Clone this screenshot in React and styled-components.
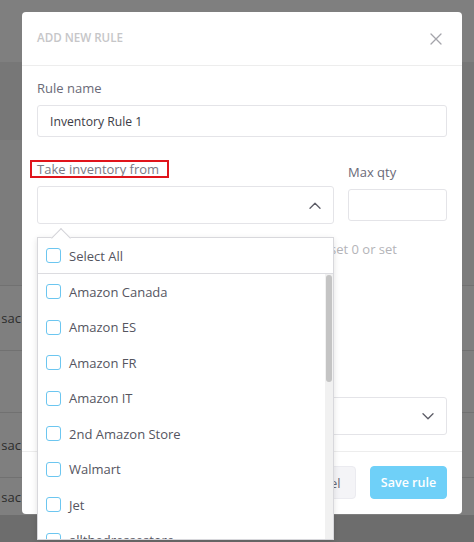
import React from 'react';
import styled, { createGlobalStyle } from 'styled-components';

const Global = createGlobalStyle`
  html, body { margin: 0; padding: 0; }
  body { font-family: 'Open Sans', 'Noto Sans', sans-serif; background: #808080; }
  * { box-sizing: border-box; }
`;

const Screen = styled.div`
  position: relative;
  width: 474px;
  height: 542px;
  overflow: hidden;
  background: #fff;
`;

/* ---------- page behind the overlay ---------- */
const Page = styled.div`
  display: flex;
  flex-direction: column;
  height: 100%;
`;
const PageBand = styled.div`
  height: ${p => p.$h}px;
  flex: none;
  background: ${p => p.$bg};
`;
const PageRow = styled.div`
  height: ${p => p.$h}px;
  flex: none;
  display: flex;
  align-items: center;
  border-top: 1px solid #e2e2e2;
  background: #fff;
`;
const RowCell = styled.div`
  width: 21px;
  display: flex;
  justify-content: flex-end;
  overflow: hidden;
  white-space: nowrap;
  font-size: 13px;
  color: #5a5a5a;
`;
const PageFoot = styled.div`
  flex: 1;
  background: #dadada;
`;

const Overlay = styled.div`
  position: absolute;
  inset: 0;
  background: rgba(0, 0, 0, 0.5);
`;

/* ---------- modal ---------- */
const Modal = styled.div`
  position: absolute;
  left: 22px;
  top: 12px;
  width: 440px;
  height: 502px;
  background: #fff;
  border-radius: 4px;
  display: flex;
  flex-direction: column;
`;
const Header = styled.div`
  height: 54px;
  flex: none;
  padding: 0 20px 0 15px;
  display: flex;
  align-items: center;
  justify-content: space-between;
  border-bottom: 1px solid #ededed;
`;
const Title = styled.div`
  font-size: 11.6px;
  font-weight: 600;
  color: #c6c6c8;
  text-transform: uppercase;
  margin-top: -3px;
`;
const Close = styled.button`
  border: 0;
  background: none;
  padding: 0;
  width: 12px;
  height: 12px;
  display: flex;
  margin-top: 1px;
`;
const Body = styled.div`
  flex: 1;
  padding: 12px 15px 0;
  display: flex;
  flex-direction: column;
`;
const Label = styled.div`
  font-size: 13px;
  line-height: 20px;
  color: #6a6a78;
  margin-bottom: 7px;
  white-space: nowrap;
`;
const Marked = styled.span`
  position: relative;
  display: inline-block;
  color: #7a7a86;
  &::after {
    content: '';
    position: absolute;
    left: -7px;
    right: -10px;
    top: 1px;
    bottom: 1px;
    border: 2px solid #e0141b;
  }
`;
const Input = styled.div`
  height: ${p => p.$h ?? 32}px;
  margin-top: ${p => p.$mt ?? 0}px;
  border: 1px solid #e4e4e8;
  border-radius: 3px;
  padding: 0 12px;
  display: flex;
  align-items: center;
  justify-content: space-between;
  font-size: 12.2px;
  color: #3c3c46;
`;
const Row = styled.div`
  display: grid;
  grid-template-columns: 297px 99px;
  column-gap: 14px;
  margin-top: 22px;
`;
const Col = styled.div`
  display: flex;
  flex-direction: column;
  padding-top: ${p => p.$pt ?? 0}px;
`;
const Helper = styled.div`
  width: 360px;
  text-align: right;
  font-size: 13px;
  line-height: 18px;
  color: #b4b4b8;
  margin-top: 16px;
  white-space: nowrap;
`;
const Footer = styled.div`
  flex: none;
  border-top: 1px solid #ededed;
  padding: 14px 15px 15px;
  display: flex;
  justify-content: flex-end;
  gap: 14px;
`;
const Button = styled.button`
  height: 33px;
  border-radius: 4px;
  font-family: inherit;
  font-size: ${p => (p.$primary ? 12.5 : 13)}px;
  white-space: nowrap;
  padding: 0;
  border: 1px solid ${p => (p.$primary ? '#6fd0f8' : '#ebebf0')};
  background: ${p => (p.$primary ? '#6fd0f8' : '#f4f4f7')};
  color: ${p => (p.$primary ? '#fff' : '#6a6a74')};
  font-weight: ${p => (p.$primary ? 600 : 400)};
  width: ${p => p.$w}px;
`;

/* ---------- dropdown ---------- */
const Dropdown = styled.div`
  position: absolute;
  left: 37px;
  top: 237px;
  width: 297px;
  height: 303px;
  background: #fff;
  border: 1px solid #d8d8dc;
  box-shadow: 0 2px 6px rgba(0, 0, 0, 0.12);
  display: flex;
  flex-direction: column;
  &::before {
    content: '';
    position: absolute;
    left: 16px;
    top: -7px;
    width: 13px;
    height: 13px;
    background: #fff;
    border-left: 1px solid #d3d3d8;
    border-top: 1px solid #d3d3d8;
    transform: rotate(45deg);
  }
`;
const Option = styled.div`
  flex: none;
  height: ${p => p.$h}px;
  display: flex;
  align-items: center;
  gap: 8px;
  padding-left: 8px;
  font-size: 13px;
  color: #55555f;
  white-space: nowrap;
  position: relative;
  border-bottom: ${p => (p.$divider ? '1px solid #dcdce0' : '0')};
`;
const Check = styled.span`
  width: 15px;
  height: 15px;
  flex: none;
  border: 1.5px solid #6cc6f0;
  border-radius: 3px;
  background: #fff;
`;
const ListArea = styled.div`
  flex: 1;
  min-height: 0;
  display: flex;
`;
const List = styled.div`
  flex: 1;
  overflow: hidden;
`;
const Track = styled.div`
  width: 8px;
  flex: none;
  background: #f1f1f1;
  padding: 1px 1px 0 1px;
`;
const Thumb = styled.div`
  height: 107px;
  border-radius: 3px;
  background: #c4c4c4;
`;

const Chevron = ({ up }) => (
  <svg width="12" height="7" viewBox="0 0 12 7" fill="none">
    <path
      d={up ? 'M1 6.2 L6 1.2 L11 6.2' : 'M1 0.8 L6 5.8 L11 0.8'}
      stroke="#5c5c66"
      strokeWidth="1.3"
      strokeLinecap="round"
      strokeLinejoin="round"
    />
  </svg>
);

const stores = [
  'Amazon Canada',
  'Amazon ES',
  'Amazon FR',
  'Amazon IT',
  '2nd Amazon Store',
  'Walmart',
  'Jet',
  'allthedressestore',
];

export default function App() {
  return (
    <>
      <Global />
      <Screen>
        <Page>
          <PageBand $h={62} $bg="#ffffff" />
          <PageBand $h={78} $bg="#eeeeee" />
          <PageBand $h={145} $bg="#f8f8f8" />
          <PageRow $h={65}><RowCell>sac</RowCell></PageRow>
          <PageRow $h={62}><RowCell /></PageRow>
          <PageRow $h={65}><RowCell>sac</RowCell></PageRow>
          <PageRow $h={38}><RowCell>sac</RowCell></PageRow>
          <PageFoot />
        </Page>
        <Overlay />
        <Modal>
          <Header>
            <Title>Add new rule</Title>
            <Close aria-label="close">
              <svg width="12" height="12" viewBox="0 0 12 12">
                <path d="M1 1 L11 11 M11 1 L1 11" stroke="#a4a4aa" strokeWidth="1.3" strokeLinecap="round" />
              </svg>
            </Close>
          </Header>
          <Body>
            <Label>Rule name</Label>
            <Input>Inventory Rule 1</Input>
            <Row>
              <Col>
                <Label><Marked>Take inventory from</Marked></Label>
                <Input $h={38}>
                  <span />
                  <Chevron up />
                </Input>
              </Col>
              <Col $pt={3}>
                <Label>Max qty</Label>
                <Input />
              </Col>
            </Row>
            <Helper>Leave empty to not set 0 or set</Helper>
            <Input $h={38} $mt={139}>
              <span />
              <Chevron />
            </Input>
          </Body>
          <Footer>
            <Button $w={71}>Cancel</Button>
            <Button $primary $w={77}>Save rule</Button>
          </Footer>
        </Modal>
        <Dropdown>
          <Option $h={36} $divider>
            <Check />
            Select All
          </Option>
          <ListArea>
            <List>
              {stores.map(s => (
                <Option key={s} $h={35.5}>
                  <Check />
                  {s}
                </Option>
              ))}
            </List>
            <Track>
              <Thumb />
            </Track>
          </ListArea>
        </Dropdown>
      </Screen>
    </>
  );
}
